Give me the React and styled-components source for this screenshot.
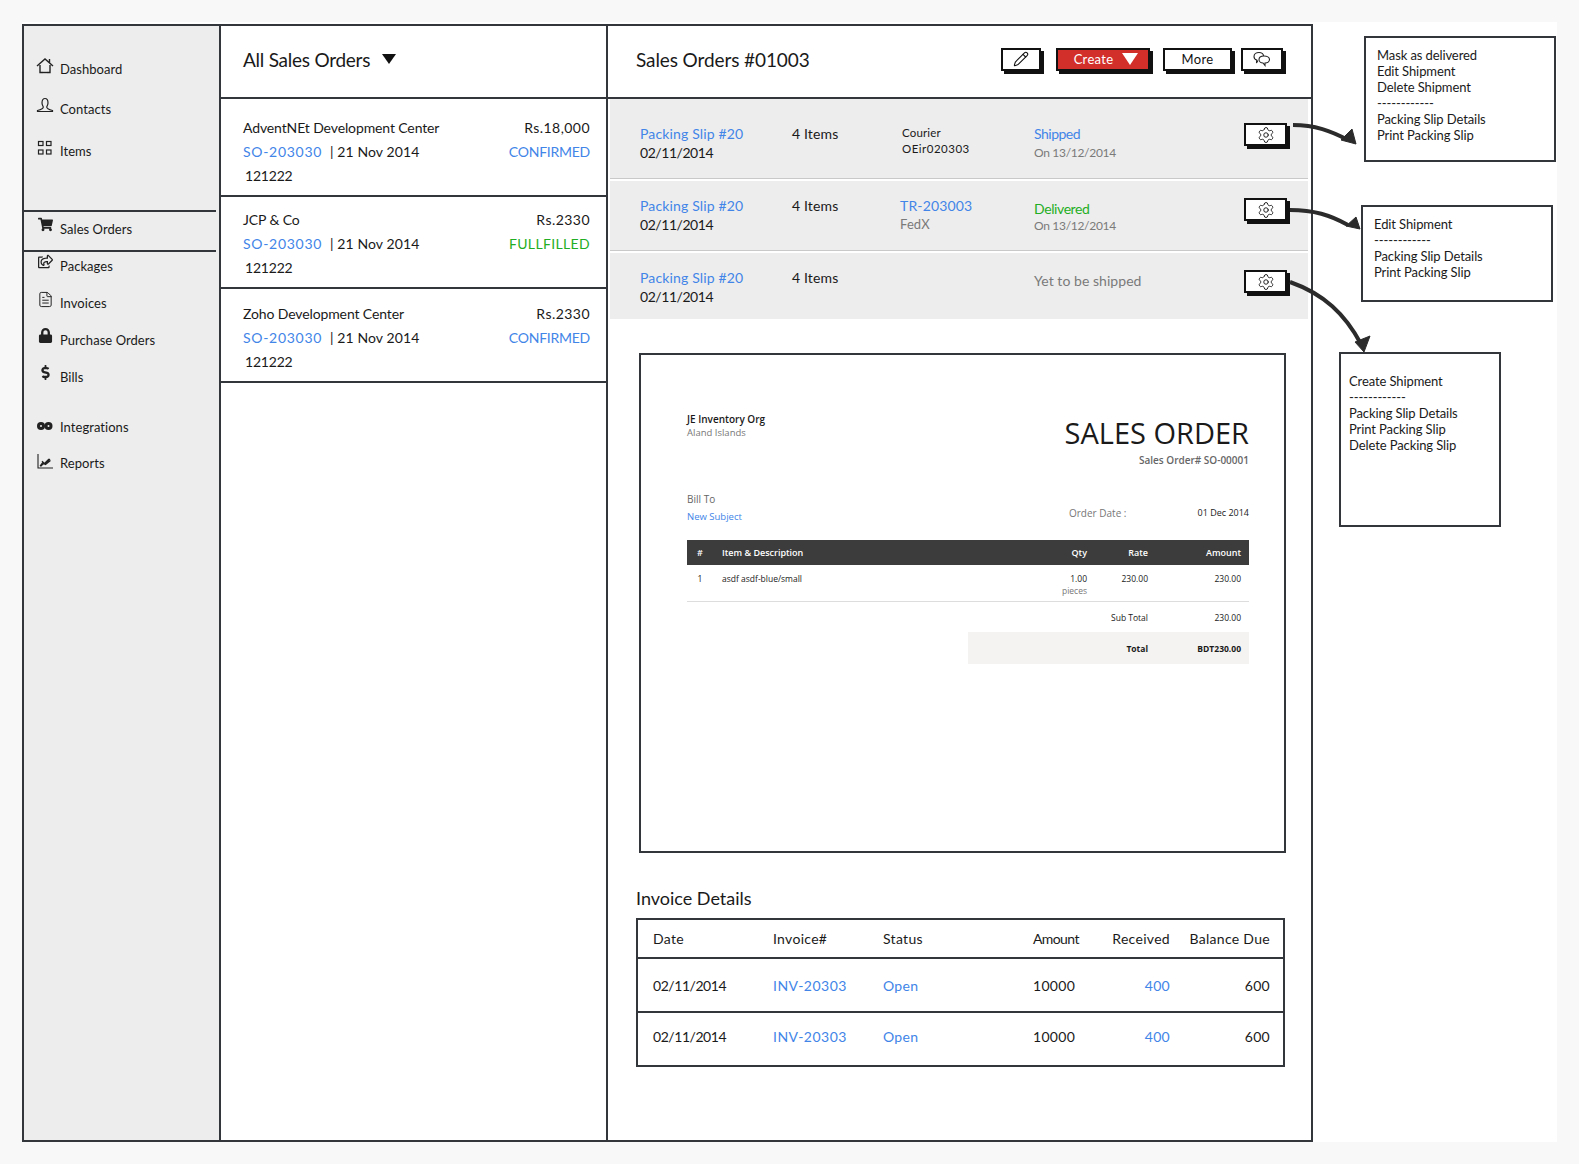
import React from 'react'
import styled, { createGlobalStyle } from 'styled-components'
import { FaShoppingCart, FaRegShareSquare, FaLock, FaDollarSign } from 'react-icons/fa'
import { Pencil, Settings, FileText } from 'lucide-react'

const colors = { line: '#33363a', blue: '#4285e8', green: '#1fae24', grey: '#7a7a7a', band: '#ededed', text: '#1a1a1a' }

const GlobalStyle = createGlobalStyle`
  * { box-sizing: border-box; }
  html, body { margin: 0; background: #f8f8f8; }
  body { font-family: "Lato", "Open Sans", sans-serif; color: ${colors.text}; }
`

const Page = styled.div`
  position: relative;
  width: 1579px;
  height: 1164px;
  padding: 22px 0 0 22px;
  overflow: hidden;
`
const Canvas = styled.div`
  display: grid;
  grid-template-columns: 199px 387px 705px 244px;
  width: 1535px;
  height: 1120px;
  padding-top: 2px;
  background: #fff;
`

/* sidebar */
const Sidebar = styled.nav`
  background: ${colors.band};
  border: 2px solid ${colors.line};
  padding-top: 28px;
`
const NavItem = styled.div`
  display: flex;
  align-items: flex-start;
  height: ${p => p.$h || 37}px;
  padding: ${p => p.$pad || 6}px 0 0 12px;
  font-size: 13px;
  line-height: 18px;
  letter-spacing: 0.05px;
`
const NavIcon = styled.span`
  display: flex;
  justify-content: center;
  width: 18px;
  margin-right: 6px;
  margin-top: -3px;
  color: #222;
`
const ActiveBand = styled.div`
  height: 42px;
  margin: 0 3px 0 -2px;
  padding: 8px 0 0 14px;
  display: flex;
  border-top: 2px solid ${colors.line};
  border-bottom: 2px solid ${colors.line};
  font-size: 13px;
  line-height: 18px;
  letter-spacing: 0.05px;
`
const NavGap = styled.div`
  height: 13px;
`

/* order list */
const ListPanel = styled.section`
  border-top: 2px solid ${colors.line};
  border-bottom: 2px solid ${colors.line};
  border-right: 2px solid ${colors.line};
`
const ListHeader = styled.header`
  display: flex;
  align-items: center;
  height: 73px;
  padding: 0 0 5px 22px;
  border-bottom: 2px solid ${colors.line};
  font-size: 19px;
  letter-spacing: -0.25px;
`
const Triangle = styled.i`
  width: 0;
  height: 0;
  margin-left: ${p => p.$gap || 12}px;
  border-left: ${p => p.$size || 7}px solid transparent;
  border-right: ${p => p.$size || 7}px solid transparent;
  border-top: ${p => (p.$size || 7) * 1.55}px solid ${p => p.$color || '#111'};
`
const OrderCard = styled.article`
  height: ${p => p.$h}px;
  padding: ${p => p.$top}px 16px 0 22px;
  border-bottom: 2px solid ${colors.line};
  font-size: 14px;
  line-height: 24px;
  letter-spacing: -0.12px;
`
const OrderLine = styled.div`
  display: flex;
  justify-content: space-between;
`
const Blue = styled.span`
  color: ${colors.blue};
`
const OrderNumber = styled(Blue)`
  letter-spacing: 0.7px;
`
const OrderPrice = styled.span`
  letter-spacing: 0.45px;
`
const OrderStatus = styled.span`
  color: ${p => p.$color};
  letter-spacing: ${p => p.$track}px;
`
const Code = styled.div`
  padding-left: 2px;
  letter-spacing: -0.2px;
`
const DateText = styled.span`
  margin-left: 8px;
  letter-spacing: 0.1px;
`

/* detail */
const DetailPanel = styled.section`
  border-top: 2px solid ${colors.line};
  border-bottom: 2px solid ${colors.line};
  border-right: 2px solid ${colors.line};
`
const DetailHeader = styled.header`
  display: flex;
  align-items: center;
  height: 73px;
  padding: 0 28px 5px 28px;
  border-bottom: 2px solid ${colors.line};
`
const DetailTitle = styled.h1`
  flex: 1;
  margin: 0;
  font-size: 19px;
  font-weight: 400;
  letter-spacing: -0.1px;
`
const SketchButton = styled.button`
  display: flex;
  align-items: center;
  justify-content: center;
  width: ${p => p.$w}px;
  height: 23px;
  margin-left: ${p => p.$gap || 0}px;
  padding: 0 0 0 ${p => p.$padLeft || 0}px;
  border: 2px solid #111;
  box-shadow: 3px 3px 0 #111;
  background: ${p => p.$bg || '#fff'};
  color: ${p => p.$fg || '#111'};
  font: 400 13px "Lato", sans-serif;
  letter-spacing: 0.3px;
`
const GearButton = styled(SketchButton)`
  margin-top: ${p => p.$mt}px;
  margin-left: 0;
`
const ShipRows = styled.div`
  width: 698px;
  margin-left: 2px;
  background: ${colors.band};
`
const ShipRow = styled.div`
  display: grid;
  grid-template-columns: 152px 110px 132px 210px 43px;
  align-items: start;
  height: ${p => p.$h}px;
  padding: ${p => p.$top}px 0 0 30px;
  border-bottom: ${p => (p.$last ? 'none' : '2px solid #fff')};
  box-shadow: ${p => (p.$last ? 'none' : 'inset 0 -1px 0 #c9c9c9')};
  font-size: 14px;
  line-height: 19px;
  letter-spacing: 0.15px;
`
const ShipCell = styled.div`
  margin-top: ${p => p.$drop || 0}px;
  margin-left: ${p => p.$shift || 0}px;
`
const CourierCell = styled.div`
  font-size: 11.5px;
  line-height: 16px;
  margin-top: 1px;
`
const CourierCode = styled.div`
  letter-spacing: 0.5px;
`
const Muted = styled.div`
  margin-top: ${p => p.$mt || 0}px;
  color: ${colors.grey};
  font-size: ${p => p.$size || 12}px;
  letter-spacing: ${p => p.$track || -0.3}px;
`
const StatusLink = styled(Blue)`
  letter-spacing: -0.5px;
`
const GreenText = styled.div`
  color: ${colors.green};
  letter-spacing: -0.4px;
`
const TightDate = styled.div`
  letter-spacing: -0.45px;
`

/* sales order document */
const Doc = styled.div`
  width: 647px;
  height: 500px;
  margin: 34px 0 0 31px;
  padding: 57px 35px 0 46px;
  border: 2px solid ${colors.line};
  font-family: "Open Sans", sans-serif;
  font-size: 8.5px;
  line-height: 13px;
`
const DocTop = styled.div`
  display: flex;
  justify-content: space-between;
`
const OrgName = styled.div`
  font-size: 10px;
  line-height: 14px;
  font-weight: 600;
`
const OrgPlace = styled.div`
  font-size: 9.5px;
  line-height: 14px;
  color: #777;
`
const DocTitleBlock = styled.div`
  padding-top: 3px;
  text-align: right;
`
const DocTitle = styled.div`
  font-size: 29px;
  line-height: 36px;
`
const DocNumber = styled.div`
  margin-top: 2px;
  font-size: 10px;
  line-height: 14px;
  font-weight: 600;
  color: #666;
`
const BillRow = styled.div`
  display: flex;
  align-items: flex-end;
  margin-top: 25px;
  font-size: 10px;
  line-height: 14px;
`
const BillTo = styled.div`
  flex: 1;
  color: #666;
`
const BillName = styled.div`
  margin-top: 4px;
  font-size: 9.5px;
  color: ${colors.blue};
`
const OrderDate = styled.div`
  display: flex;
  justify-content: space-between;
  width: 180px;
  padding-bottom: 4px;
  color: #777;
`
const OrderDateValue = styled.span`
  font-size: 9px;
  color: #222;
`
const ItemGrid = styled.div`
  display: grid;
  grid-template-columns: 26px 1fr 60px 61px 93px;
  padding-right: 8px;
  text-align: right;
`
const ItemHead = styled(ItemGrid)`
  margin-top: 16px;
  height: 25px;
  align-items: center;
  background: #3c3c3c;
  color: #fff;
  font-weight: 600;
  font-size: 9px;
`
const ItemBody = styled(ItemGrid)`
  height: 37px;
  padding-top: 7px;
  border-bottom: 1px solid #ddd;
`
const SubRow = styled(ItemGrid)`
  padding-top: 9px;
  height: 30px;
`
const NumCell = styled.span`
  text-align: center;
`
const DescCell = styled.span`
  padding-left: 9px;
  text-align: left;
`
const Pieces = styled.div`
  margin-top: -1px;
  color: #777;
  white-space: nowrap;
`
const TotalBand = styled.div`
  display: grid;
  grid-template-columns: 1fr 93px;
  align-items: center;
  width: 281px;
  height: 32px;
  margin-left: auto;
  padding-right: 8px;
  background: #f4f3f1;
  text-align: right;
  font-weight: 700;
`

/* invoices */
const SectionTitle = styled.h2`
  margin: 34px 0 9px 28px;
  font-size: 18px;
  line-height: 22px;
  font-weight: 400;
`
const InvoiceTable = styled.div`
  width: 649px;
  margin-left: 28px;
  border: 2px solid ${colors.line};
  font-size: 14px;
  letter-spacing: 0.3px;
`
const InvoiceRow = styled.div`
  display: grid;
  grid-template-columns: 120px 110px 150px 57px 80px 100px;
  align-items: center;
  height: ${p => p.$h}px;
  padding: 0 0 ${p => p.$bottom || 0}px 15px;
  border-top: ${p => (p.$first ? 'none' : `2px solid ${colors.line}`)};
`
const InvoiceDate = styled.span`
  letter-spacing: -0.45px;
`
const AmountHead = styled.span`
  letter-spacing: -0.6px;
`
const RightCell = styled.span`
  text-align: right;
  white-space: nowrap;
  color: ${p => p.$color || 'inherit'};
`
const NowrapBlue = styled(Blue)`
  white-space: nowrap;
  letter-spacing: 0.5px;
`

/* annotation boxes on the right */
const Notes = styled.aside`
  padding-top: 12px;
`
const NoteBox = styled.div`
  width: ${p => p.$w}px;
  height: ${p => p.$h}px;
  margin: ${p => p.$top}px 0 0 ${p => p.$left}px;
  padding: ${p => p.$pad}px 0 0 ${p => p.$padX || 11}px;
  border: 2px solid ${colors.line};
  font-size: 13px;
  line-height: 16px;
  letter-spacing: -0.1px;
  white-space: pre;
`
const Arrows = styled.svg`
  position: absolute;
  top: 0;
  left: 0;
  pointer-events: none;
`

const HouseIcon = () => (
  <svg width="18" height="18" viewBox="0 0 18 18" fill="none" stroke="#222" strokeWidth="1.4">
    <path d="M1 9 9 2l8 7M4 8v7.500h3M14 8v7.500h-3M13.500 2v4" />
    <path d="M7 15.500h4" />
  </svg>
)
const PersonIcon = () => (
  <svg width="18" height="18" viewBox="0 0 18 18" fill="none" stroke="#222" strokeWidth="1.2">
    <path d="M6 6c0-3 1.300-4.500 3-4.500S12 3 12 6c0 2-1 3-1.300 4 0 1 .5 2 5.800 3.500v1H1.500v-1C7 12 7.300 11 7.300 10 7 9 6 8 6 6Z" />
  </svg>
)
const GridIcon = () => (
  <svg width="18" height="18" viewBox="0 0 18 18" fill="none" stroke="#222" strokeWidth="1.200">
    <rect x="2.500" y="2.500" width="4.500" height="4" />
    <rect x="10.500" y="2.500" width="4.500" height="4" />
    <rect x="2.500" y="11" width="4.500" height="4" />
    <rect x="10.500" y="11" width="4.500" height="4" />
  </svg>
)
const LinkIcon = () => (
  <svg width="18" height="18" viewBox="0 0 18 18" fill="#222">
    <circle cx="5" cy="11" r="4" />
    <circle cx="12.500" cy="11" r="4" />
    <circle cx="5" cy="11" r="1" fill="#eee" />
    <circle cx="12.500" cy="11" r="1" fill="#eee" />
  </svg>
)
const ChartIcon = () => (
  <svg width="18" height="18" viewBox="0 0 18 18" fill="none" stroke="#222" strokeWidth="1.100">
    <path d="M2 3v14h15" />
    <path d="M4 15l3-4 2 2 5-5M4.500 15.500l3-3 2 1 5-4M6 10l2 3 5-5" />
  </svg>
)
const ChatIcon = () => (
  <svg width="18" height="16" viewBox="0 0 18 16" fill="none" stroke="#222" strokeWidth="1.100">
    <path d="M5 9.500 3.500 12l.2-3C2 8.500 1 7 1 5.500 1 3 3.500 1.500 6 1.500s4.500 1.500 4.500 3.500" />
    <path d="M12 12v2.500L10 12c-2 0-4-1.500-4-3.500S8 5 11 5s5.500 1.500 5.500 3.500S14.500 12 12 12Z" />
  </svg>
)

const orders = [
  { name: 'AdventNEt Development Center', price: 'Rs.18,000', status: 'CONFIRMED', color: colors.blue, track: -0.25, h: 98, top: 17 },
  { name: 'JCP & Co', price: 'Rs.2330', status: 'FULLFILLED', color: colors.green, track: 0.35, h: 92, top: 11 },
  { name: 'Zoho Development Center', price: 'Rs.2330', status: 'CONFIRMED', color: colors.blue, track: -0.25, h: 94, top: 13 },
]

const invoices = [{ h: 54 }, { h: 54, bottom: 6 }]

function App() {
  return (
    <Page>
      <GlobalStyle />
      <Canvas>
        <Sidebar>
          <NavItem $h={40}><NavIcon><HouseIcon /></NavIcon>Dashboard</NavItem>
          <NavItem $h={42}><NavIcon><PersonIcon /></NavIcon>Contacts</NavItem>
          <NavItem $h={74}><NavIcon><GridIcon /></NavIcon>Items</NavItem>
          <ActiveBand><NavIcon><FaShoppingCart size={15} /></NavIcon>Sales Orders</ActiveBand>
          <NavItem $pad={5} $h={36}><NavIcon><FaRegShareSquare size={15} /></NavIcon>Packages</NavItem>
          <NavItem><NavIcon><FileText size={17} strokeWidth={1.4} /></NavIcon>Invoices</NavItem>
          <NavItem><NavIcon><FaLock size={15} /></NavIcon>Purchase Orders</NavItem>
          <NavItem><NavIcon><FaDollarSign size={15} /></NavIcon>Bills</NavItem>
          <NavGap />
          <NavItem $h={36}><NavIcon><LinkIcon /></NavIcon>Integrations</NavItem>
          <NavItem><NavIcon><ChartIcon /></NavIcon>Reports</NavItem>
        </Sidebar>

        <ListPanel>
          <ListHeader>All Sales Orders<Triangle /></ListHeader>
          {orders.map(o => (
            <OrderCard key={o.name} $h={o.h} $top={o.top}>
              <OrderLine><span>{o.name}</span><OrderPrice>{o.price}</OrderPrice></OrderLine>
              <OrderLine>
                <span><OrderNumber>SO-203030</OrderNumber><DateText>| 21 Nov 2014</DateText></span>
                <OrderStatus $color={o.color} $track={o.track}>{o.status}</OrderStatus>
              </OrderLine>
              <Code>121222</Code>
            </OrderCard>
          ))}
        </ListPanel>

        <DetailPanel>
          <DetailHeader>
            <DetailTitle>Sales Orders #01003</DetailTitle>
            <SketchButton $w={40}><Pencil size={16} strokeWidth={1.6} /></SketchButton>
            <SketchButton $w={94} $gap={15} $bg="#d22f2b" $fg="#fff" $padLeft={6}>Create<Triangle $color="#fff" $size={8} $gap={9} /></SketchButton>
            <SketchButton $w={69} $gap={13}>More</SketchButton>
            <SketchButton $w={42} $gap={9}><ChatIcon /></SketchButton>
          </DetailHeader>

          <ShipRows>
            <ShipRow $h={82} $top={25}>
              <div><Blue>Packing Slip #20</Blue><TightDate>02/11/2014</TightDate></div>
              <div>4 Items</div>
              <CourierCell><div>Courier</div><CourierCode>OEir020303</CourierCode></CourierCell>
              <div><StatusLink>Shipped</StatusLink><Muted>On 13/12/2014</Muted></div>
              <GearButton $w={43} $mt={-1}><Settings size={18} strokeWidth={1.2} /></GearButton>
            </ShipRow>
            <ShipRow $h={72} $top={15}>
              <div><Blue>Packing Slip #20</Blue><TightDate>02/11/2014</TightDate></div>
              <div>4 Items</div>
              <ShipCell $shift={-2}><Blue>TR-203003</Blue><Muted $size={13} $track={0.1}>FedX</Muted></ShipCell>
              <ShipCell $drop={3}><GreenText>Delivered</GreenText><Muted $mt={-2}>On 13/12/2014</Muted></ShipCell>
              <GearButton $w={43} $mt={2}><Settings size={18} strokeWidth={1.2} /></GearButton>
            </ShipRow>
            <ShipRow $h={66} $top={15} $last>
              <div><Blue>Packing Slip #20</Blue><TightDate>02/11/2014</TightDate></div>
              <div>4 Items</div>
              <div />
              <ShipCell $drop={3}><Muted $size={14} $track={0.05}>Yet to be shipped</Muted></ShipCell>
              <GearButton $w={43} $mt={2}><Settings size={18} strokeWidth={1.2} /></GearButton>
            </ShipRow>
          </ShipRows>

          <Doc>
            <DocTop>
              <div>
                <OrgName>JE Inventory Org</OrgName>
                <OrgPlace>Aland Islands</OrgPlace>
              </div>
              <DocTitleBlock>
                <DocTitle>SALES ORDER</DocTitle>
                <DocNumber>Sales Order# SO-00001</DocNumber>
              </DocTitleBlock>
            </DocTop>
            <BillRow>
              <BillTo>Bill To<BillName>New Subject</BillName></BillTo>
              <OrderDate>Order Date :<OrderDateValue>01 Dec 2014</OrderDateValue></OrderDate>
            </BillRow>
            <ItemHead>
              <NumCell>#</NumCell>
              <DescCell>Item &amp; Description</DescCell>
              <span>Qty</span>
              <span>Rate</span>
              <span>Amount</span>
            </ItemHead>
            <ItemBody>
              <NumCell>1</NumCell>
              <DescCell>asdf asdf-blue/small</DescCell>
              <div>1.00<Pieces>pieces</Pieces></div>
              <span>230.00</span>
              <span>230.00</span>
            </ItemBody>
            <SubRow>
              <span />
              <span />
              <span />
              <RightCell>Sub Total</RightCell>
              <span>230.00</span>
            </SubRow>
            <TotalBand><span>Total</span><span>BDT230.00</span></TotalBand>
          </Doc>

          <SectionTitle>Invoice Details</SectionTitle>
          <InvoiceTable>
            <InvoiceRow $h={37} $first>
              <span>Date</span><span>Invoice#</span><span>Status</span><AmountHead>Amount</AmountHead>
              <RightCell>Received</RightCell><RightCell>Balance Due</RightCell>
            </InvoiceRow>
            {invoices.map((r, i) => (
              <InvoiceRow key={i} $h={r.h} $bottom={r.bottom}>
                <InvoiceDate>02/11/2014</InvoiceDate>
                <NowrapBlue>INV-20303</NowrapBlue>
                <Blue>Open</Blue>
                <span>10000</span>
                <RightCell $color={colors.blue}>400</RightCell>
                <RightCell>600</RightCell>
              </InvoiceRow>
            ))}
          </InvoiceTable>
        </DetailPanel>

        <Notes>
          <NoteBox $w={192} $h={126} $top={0} $left={51} $pad={9}>
            {'Mask as delivered\nEdit Shipment\nDelete Shipment\n------------\nPacking Slip Details\nPrint Packing Slip'}
          </NoteBox>
          <NoteBox $w={192} $h={97} $top={43} $left={48} $pad={9}>
            {'Edit Shipment\n------------\nPacking Slip Details\nPrint Packing Slip'}
          </NoteBox>
          <NoteBox $w={162} $h={175} $top={50} $left={26} $pad={19} $padX={8}>
            {'Create Shipment\n------------\nPacking Slip Details\nPrint Packing Slip\nDelete Packing Slip'}
          </NoteBox>
        </Notes>
      </Canvas>

      <Arrows width="1579" height="1164" viewBox="0 0 1579 1164" fill="none" stroke="#2b2b2b" strokeWidth="4">
        <path d="M1293 125c22 0 38 6 55 15" />
        <path d="M1341 140l11-11 4 15Z" fill="#2b2b2b" strokeWidth="1" />
        <path d="M1290 210c24 0 40 5 58 15" />
        <path d="M1346 226l10-9 4 12Z" fill="#2b2b2b" strokeWidth="1" />
        <path d="M1290 282c34 12 55 32 71 62" />
        <path d="M1355 342l15-6-6 16Z" fill="#2b2b2b" strokeWidth="1" />
      </Arrows>
    </Page>
  )
}

export default App
